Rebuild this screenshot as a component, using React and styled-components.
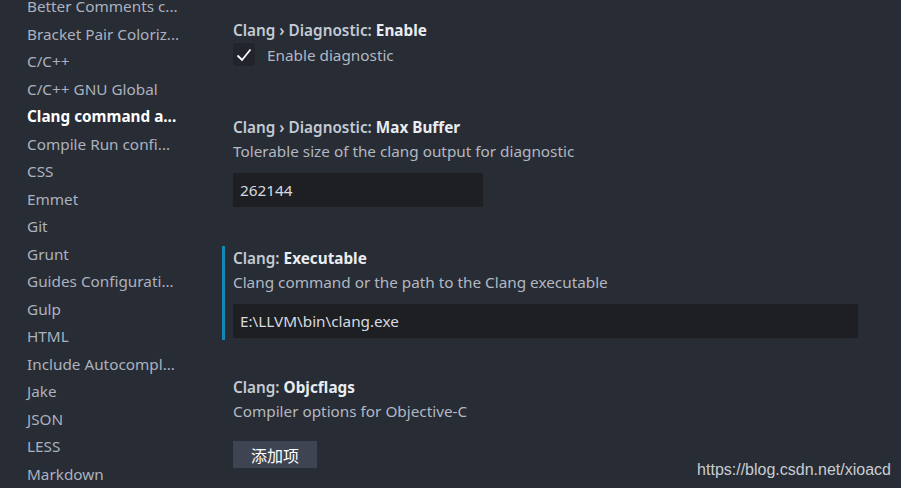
import React from "react";
import styled, { createGlobalStyle } from "styled-components";

const GlobalStyle = createGlobalStyle`
  html, body {
    margin: 0;
    padding: 0;
    background: #282c34;
    overflow: hidden;
  }
  body {
    font-family: "Noto Sans", "Noto Sans CJK SC", sans-serif;
  }
`;

const Page = styled.div`
  display: flex;
  width: 901px;
  height: 488px;
  background: #282c34;
  overflow: hidden;
  position: relative;
`;

const Sidebar = styled.ul`
  list-style: none;
  width: 222px;
  margin: -7px 0 0 0;
  padding: 0 0 0 27px;
  box-sizing: border-box;
  flex-shrink: 0;
`;

const NavItem = styled.li`
  height: 27.5px;
  line-height: 27.5px;
  font-size: 15.3px;
  white-space: nowrap;
  color: ${(p) => (p.$active ? "#ffffff" : "#abb2bf")};
  font-weight: ${(p) => (p.$active ? 700 : 400)};
`;

const Content = styled.div`
  display: flex;
  flex-direction: column;
  padding-top: 18px;
  flex: 1;
`;

const Setting = styled.section`
  padding: ${(p) => p.$pt || 0}px 0 ${(p) => p.$pb || 0}px 8px;
  border-left: 3px solid ${(p) => (p.$focused ? "#1388b3" : "transparent")};
  margin-bottom: ${(p) => p.$mb || 0}px;
`;

const Title = styled.div`
  font-size: 15.3px;
  line-height: 24px;
  color: #c4cad4;
  font-weight: 600;
  b {
    color: #e9ecf0;
    font-weight: 700;
  }
`;

const Description = styled.div`
  font-size: 15.3px;
  line-height: 24px;
  color: #b2b8c2;
`;

const CheckRow = styled.label`
  display: flex;
  align-items: center;
  gap: 12px;
  margin-top: 1px;
  font-size: 15.3px;
  color: #b2b8c2;
`;

const CheckBox = styled.span`
  width: 22px;
  height: 23px;
  border-radius: 3px;
  background: #21252b;
  display: flex;
  align-items: center;
  justify-content: center;
`;

const TextInput = styled.div`
  margin-top: 10px;
  width: ${(p) => p.$width}px;
  height: 34px;
  box-sizing: border-box;
  background: #1d1f23;
  padding: 0 7px;
  display: flex;
  align-items: center;
  font-size: 15.3px;
  color: #d7dae0;
`;

const AddButton = styled.button`
  margin-top: 18px;
  width: 84px;
  height: 27px;
  border: none;
  background: #3e4452;
  color: #ffffff;
  font-family: "Noto Sans CJK SC", sans-serif;
  font-size: 16px;
  padding: 0;
`;

const Watermark = styled.div`
  position: absolute;
  right: 10px;
  bottom: 9px;
  font-family: "Liberation Sans", Arial, sans-serif;
  font-size: 16px;
  color: #c8ccd2;
`;

const navItems = [
  "Better Comments c...",
  "Bracket Pair Coloriz...",
  "C/C++",
  "C/C++ GNU Global",
  "Clang command a...",
  "Compile Run confi...",
  "CSS",
  "Emmet",
  "Git",
  "Grunt",
  "Guides Configurati...",
  "Gulp",
  "HTML",
  "Include Autocompl...",
  "Jake",
  "JSON",
  "LESS",
  "Markdown",
];

export default function App() {
  return (
    <>
      <GlobalStyle />
      <Page>
        <Sidebar>
          {navItems.map((n) => (
            <NavItem key={n} $active={n === "Clang command a..."}>
              {n}
            </NavItem>
          ))}
        </Sidebar>
        <Content>
          <Setting $mb={49}>
            <Title>
              Clang › Diagnostic: <b>Enable</b>
            </Title>
            <CheckRow>
              <CheckBox>
                <svg width="18" height="18" viewBox="0 0 18 18">
                  <path d="M2.5 9.5 L7 14 L15.5 3.5" fill="none" stroke="#ffffff" strokeWidth="1.8" />
                </svg>
              </CheckBox>
              Enable diagnostic
            </CheckRow>
          </Setting>
          <Setting $mb={39}>
            <Title>
              Clang › Diagnostic: <b>Max Buffer</b>
            </Title>
            <Description>Tolerable size of the clang output for diagnostic</Description>
            <TextInput $width={250}>262144</TextInput>
          </Setting>
          <Setting $focused $pb={2} $mb={35}>
            <Title>
              Clang: <b>Executable</b>
            </Title>
            <Description>Clang command or the path to the Clang executable</Description>
            <TextInput $width={625}>E:\LLVM\bin\clang.exe</TextInput>
          </Setting>
          <Setting>
            <Title>
              Clang: <b>Objcflags</b>
            </Title>
            <Description>Compiler options for Objective-C</Description>
            <AddButton>添加项</AddButton>
          </Setting>
        </Content>
        <Watermark>https://blog.csdn.net/xioacd</Watermark>
      </Page>
    </>
  );
}
